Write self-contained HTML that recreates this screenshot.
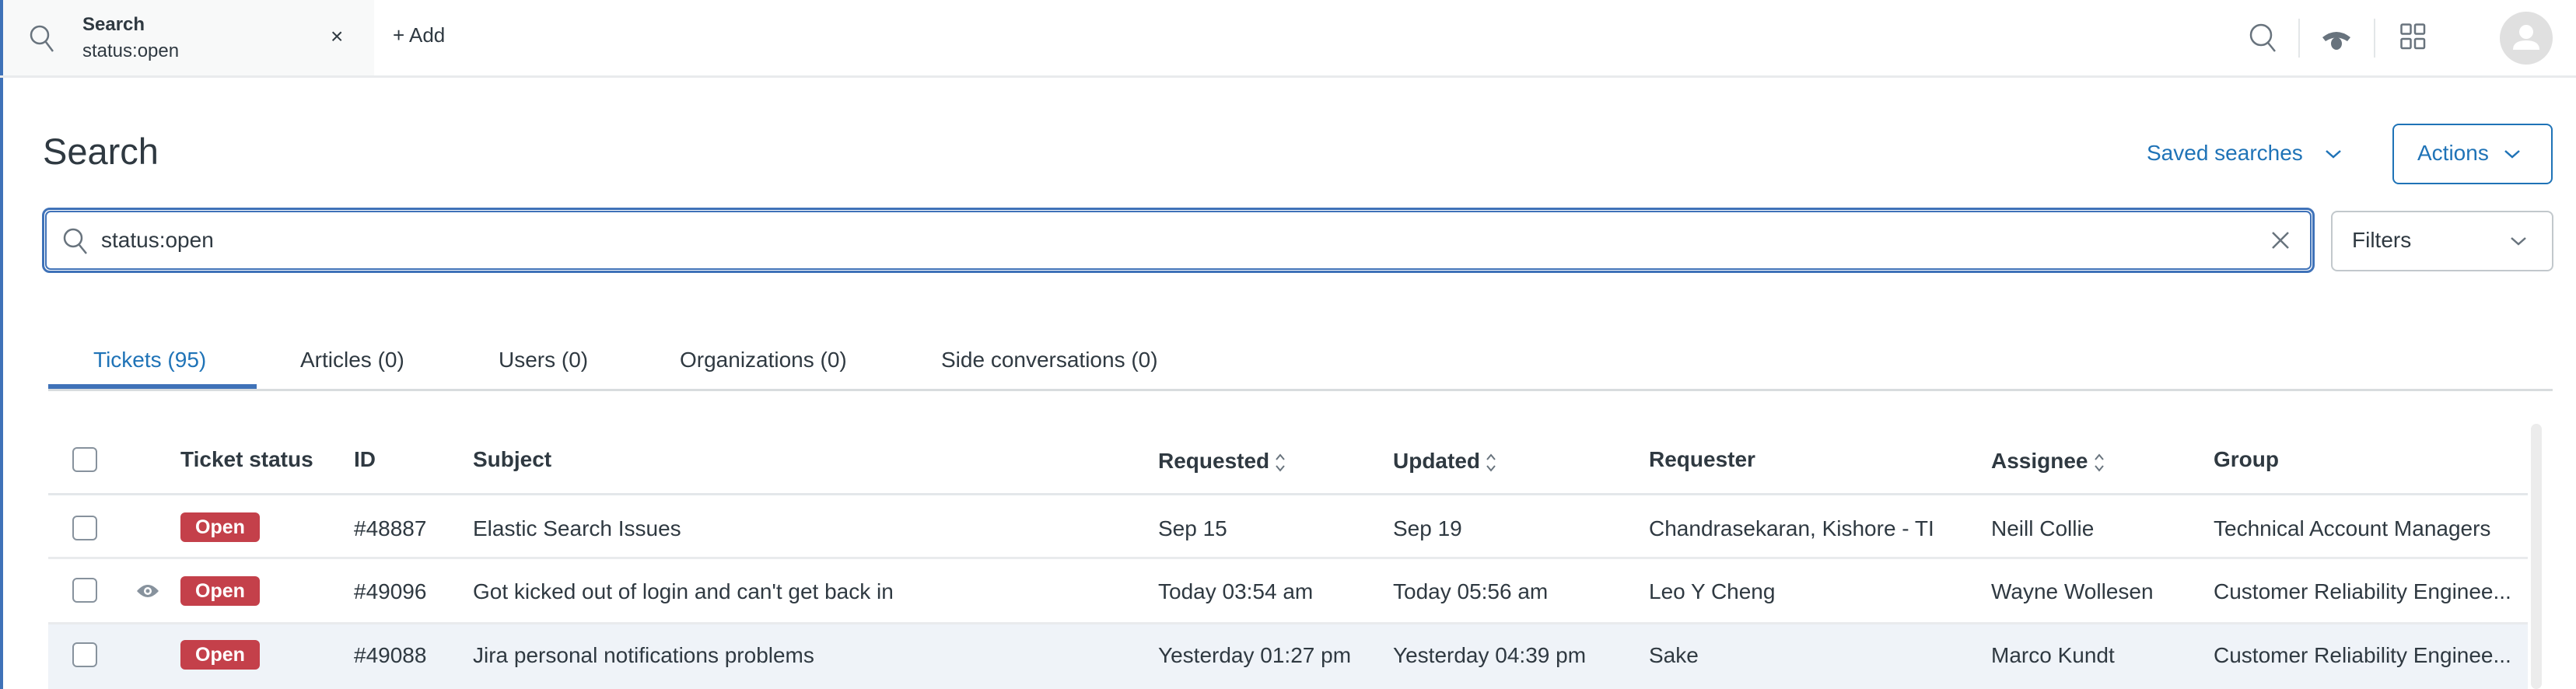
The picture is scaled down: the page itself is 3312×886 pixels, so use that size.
<!DOCTYPE html>
<html><head><meta charset="utf-8"><style>
*{box-sizing:border-box;margin:0;padding:0}
body{width:3312px;height:886px;overflow:hidden;background:#fff;font-family:"Liberation Sans",sans-serif;color:#2f3941;position:relative;font-size:28px;line-height:1.35}
.a{position:absolute;white-space:nowrap}
.blue{color:#1f73b7}
.hd{font-weight:bold;color:#2f3941}
.cb{position:absolute;left:93px;width:32px;height:32px;border:2px solid #87929d;border-radius:6px;background:#fff}
.badge{position:absolute;left:232px;width:102px;height:38px;background:#c4404a;border-radius:6px;color:#fff;font-weight:bold;font-size:25px;line-height:38px;text-align:center}
.row{position:absolute;left:62px;width:3188px;border-top:3px solid #e4e7ea}
.srt{display:inline-block;vertical-align:middle;margin-left:6px}
</style></head><body>
<div class="a" style="left:0;top:0;width:4px;height:886px;background:#3f72b8"></div>
<div class="a" style="left:4px;top:0;width:477px;height:97px;background:#f8f9f9"></div>
<div class="a" style="left:0;top:97px;width:3312px;height:3px;background:#e9ebed"></div>
<svg class="a" style="left:36px;top:30px" width="36" height="40" viewBox="0 0 36 40"><circle cx="15" cy="15" r="11" fill="none" stroke="#68737d" stroke-width="2.5"/><line x1="23" y1="24" x2="32" y2="36" stroke="#68737d" stroke-width="2.5"/></svg>
<div class="a" style="left:106px;top:16px;font-size:24px;font-weight:bold">Search</div>
<div class="a" style="left:106px;top:50px;font-size:24px">status:open</div>
<div class="a" style="left:425px;top:28px;font-size:28px;color:#2f3941">×</div>
<div class="a" style="left:505px;top:28px;font-size:26px">+ Add</div>
<svg class="a" style="left:2890px;top:28px" width="40" height="42" viewBox="0 0 40 42"><circle cx="17" cy="17" r="13" fill="none" stroke="#68737d" stroke-width="2.5"/><line x1="26" y1="27" x2="35" y2="38" stroke="#68737d" stroke-width="2.5"/></svg>
<div class="a" style="left:2955px;top:24px;width:2px;height:50px;background:#e3e6e8"></div>
<svg class="a" style="left:2984px;top:36px" width="40" height="32" viewBox="0 0 40 32"><path d="M2 12 Q20 -2 38 12 L34 17 Q20 8 6 17Z" fill="#68737d"/><ellipse cx="20" cy="20" rx="7" ry="8" fill="#68737d"/></svg>
<div class="a" style="left:3052px;top:24px;width:2px;height:50px;background:#e3e6e8"></div>
<svg class="a" style="left:3086px;top:30px" width="34" height="36" viewBox="0 0 34 36"><rect x="1.5" y="1.5" width="12" height="12" rx="1.5" fill="none" stroke="#68737d" stroke-width="2.5"/><rect x="19" y="1.5" width="12" height="12" rx="1.5" fill="none" stroke="#68737d" stroke-width="2.5"/><rect x="1.5" y="20" width="12" height="12" rx="1.5" fill="none" stroke="#68737d" stroke-width="2.5"/><rect x="19" y="20" width="12" height="12" rx="1.5" fill="none" stroke="#68737d" stroke-width="2.5"/></svg>
<svg class="a" style="left:3214px;top:15px" width="68" height="68" viewBox="0 0 68 68"><circle cx="34" cy="34" r="34" fill="#e0e0e0"/><circle cx="34" cy="26" r="9" fill="#fff"/><path d="M17 49 Q17 37 34 37 Q51 37 51 49Z" fill="#fff"/></svg>
<div class="a" style="left:55px;top:163px;font-size:47px;color:#2f3941">Search</div>
<div class="a blue" style="left:2760px;top:178px;font-size:28px">Saved searches</div>
<svg class="a" style="left:2988px;top:190px" width="24" height="16" viewBox="0 0 24 16"><path d="M3 4 L12 12 L21 4" fill="none" stroke="#1f73b7" stroke-width="2.5"/></svg>
<div class="a" style="left:3076px;top:159px;width:206px;height:78px;border:2px solid #1f73b7;border-radius:8px"></div>
<div class="a blue" style="left:3108px;top:178px;font-size:28px">Actions</div>
<svg class="a" style="left:3218px;top:190px" width="24" height="16" viewBox="0 0 24 16"><path d="M3 4 L12 12 L21 4" fill="none" stroke="#1f73b7" stroke-width="2.5"/></svg>
<div class="a" style="left:54px;top:267px;width:2922px;height:84px;border:3px solid #3f72b8;border-radius:10px"></div>
<div class="a" style="left:58px;top:271px;width:2914px;height:76px;border:2px solid #3f72b8;border-radius:7px"></div>
<svg class="a" style="left:80px;top:292px" width="34" height="36" viewBox="0 0 34 36"><circle cx="14" cy="14" r="11" fill="none" stroke="#68737d" stroke-width="2.5"/><line x1="22" y1="23" x2="31" y2="34" stroke="#68737d" stroke-width="2.5"/></svg>
<div class="a" style="left:130px;top:290px;font-size:28px">status:open</div>
<svg class="a" style="left:2918px;top:295px" width="28" height="28" viewBox="0 0 28 28"><path d="M4 4 L24 24 M24 4 L4 24" stroke="#68737d" stroke-width="2.5"/></svg>
<div class="a" style="left:2997px;top:271px;width:286px;height:78px;border:2px solid #c2c8cc;border-radius:8px"></div>
<div class="a" style="left:3024px;top:290px;font-size:28px">Filters</div>
<svg class="a" style="left:3226px;top:302px" width="24" height="16" viewBox="0 0 24 16"><path d="M3 4 L12 12 L21 4" fill="none" stroke="#68737d" stroke-width="2.5"/></svg>
<div class="a blue" style="left:120px;top:444px;font-size:28px">Tickets (95)</div>
<div class="a" style="left:386px;top:444px;font-size:28px">Articles (0)</div>
<div class="a" style="left:641px;top:444px;font-size:28px">Users (0)</div>
<div class="a" style="left:874px;top:444px;font-size:28px">Organizations (0)</div>
<div class="a" style="left:1210px;top:444px;font-size:28px">Side conversations (0)</div>
<div class="a" style="left:62px;top:500px;width:3220px;height:3px;background:#d8dcde"></div>
<div class="a" style="left:62px;top:494px;width:268px;height:6px;background:#3f72b8"></div>
<div class="a" style="left:3254px;top:545px;width:14px;height:341px;background:#ececec;border-radius:7px"></div>
<div class="cb" style="top:575px"></div>
<div class="a hd" style="left:232px;top:572px">Ticket status</div>
<div class="a hd" style="left:455px;top:572px">ID</div>
<div class="a hd" style="left:608px;top:572px">Subject</div>
<div class="a hd" style="left:1489px;top:574px">Requested<svg class="srt" width="16" height="28" viewBox="0 0 16 28"><path d="M3 10 L8 4 L13 10 M3 18 L8 24 L13 18" fill="none" stroke="#68737d" stroke-width="2"/></svg></div>
<div class="a hd" style="left:1791px;top:574px">Updated<svg class="srt" width="16" height="28" viewBox="0 0 16 28"><path d="M3 10 L8 4 L13 10 M3 18 L8 24 L13 18" fill="none" stroke="#68737d" stroke-width="2"/></svg></div>
<div class="a hd" style="left:2120px;top:572px">Requester</div>
<div class="a hd" style="left:2560px;top:574px">Assignee<svg class="srt" width="16" height="28" viewBox="0 0 16 28"><path d="M3 10 L8 4 L13 10 M3 18 L8 24 L13 18" fill="none" stroke="#68737d" stroke-width="2"/></svg></div>
<div class="a hd" style="left:2846px;top:572px">Group</div>
<div class="row" style="top:634px"></div>
<div class="cb" style="top:663px"></div>
<div class="badge" style="top:659px">Open</div>
<div class="a" style="left:455px;top:661px">#48887</div>
<div class="a" style="left:608px;top:661px">Elastic Search Issues</div>
<div class="a" style="left:1489px;top:661px">Sep 15</div>
<div class="a" style="left:1791px;top:661px">Sep 19</div>
<div class="a" style="left:2120px;top:661px">Chandrasekaran, Kishore - TI</div>
<div class="a" style="left:2560px;top:661px">Neill Collie</div>
<div class="a" style="left:2846px;top:661px">Technical Account Managers</div>
<div class="row" style="top:716px;border-top-color:#e9ebed"></div>
<div class="cb" style="top:743px"></div>
<svg class="a" style="left:174px;top:748px" width="32" height="24" viewBox="0 0 32 24"><path d="M2 12 Q16 -4 30 12 Q16 28 2 12Z" fill="#87929d"/><circle cx="16" cy="12" r="5" fill="#fff"/><circle cx="16" cy="12" r="2.5" fill="#87929d"/></svg>
<div class="badge" style="top:741px">Open</div>
<div class="a" style="left:455px;top:742px">#49096</div>
<div class="a" style="left:608px;top:742px">Got kicked out of login and can't get back in</div>
<div class="a" style="left:1489px;top:742px">Today 03:54 am</div>
<div class="a" style="left:1791px;top:742px">Today 05:56 am</div>
<div class="a" style="left:2120px;top:742px">Leo Y Cheng</div>
<div class="a" style="left:2560px;top:742px">Wayne Wollesen</div>
<div class="a" style="left:2846px;top:742px">Customer Reliability Enginee...</div>
<div class="a" style="left:62px;top:800px;width:3188px;height:86px;background:#eff3f8;border-top:3px solid #e9ebed"></div>
<div class="cb" style="top:826px"></div>
<div class="badge" style="top:823px">Open</div>
<div class="a" style="left:455px;top:824px">#49088</div>
<div class="a" style="left:608px;top:824px">Jira personal notifications problems</div>
<div class="a" style="left:1489px;top:824px">Yesterday 01:27 pm</div>
<div class="a" style="left:1791px;top:824px">Yesterday 04:39 pm</div>
<div class="a" style="left:2120px;top:824px">Sake</div>
<div class="a" style="left:2560px;top:824px">Marco Kundt</div>
<div class="a" style="left:2846px;top:824px">Customer Reliability Enginee...</div>
</body></html>
